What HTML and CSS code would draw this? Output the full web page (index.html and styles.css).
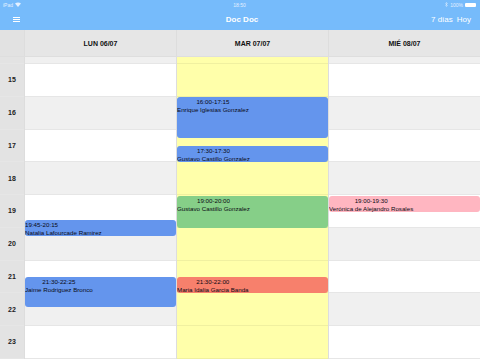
FILE: index.html
```html
<!DOCTYPE html>
<html lang="es">
<head>
    <meta charset="UTF-8">
    <meta name="viewport" content="width=device-width, initial-scale=1.0">
    <title>Doc Doc</title>
    <link rel="stylesheet" href="styles.css">
</head>
<body>
    <div class="top">
        <div class="status">
            <div class="status-left">
                <span>iPad</span>
                <svg width="6" height="5" viewBox="0 0 6 5"><path d="M0 1.6 Q3 -0.6 6 1.6 L3 5 Z" fill="#e4f0ff"/></svg>
            </div>
            <div class="status-time">18:50</div>
            <div class="status-right">
                <svg width="3" height="5" viewBox="0 0 3 5"><path d="M0.3 1.3 L2.5 3.6 L1.4 4.6 L1.4 0.4 L2.5 1.4 L0.3 3.7" fill="none" stroke="#e4f0ff" stroke-width="0.5"/></svg>
                <span>100%</span>
                <span class="battery"></span>
            </div>
        </div>
        <div class="navbar">
            <div class="menu">
                <span></span><span></span><span></span>
            </div>
            <div class="title">Doc Doc</div>
            <div class="nav-right">
                <span>7 días</span>
                <span>Hoy</span>
            </div>
        </div>
    </div>

    <div class="head">
        <div class="head-gutter"></div>
        <div class="head-day">LUN 06/07</div>
        <div class="head-day">MAR 07/07</div>
        <div class="head-day">MIÉ 08/07</div>
    </div>

    <div class="cal">
        <div class="gutter">
            <div class="slot first"></div>
            <div class="slot">15</div>
            <div class="slot">16</div>
            <div class="slot">17</div>
            <div class="slot">18</div>
            <div class="slot">19</div>
            <div class="slot">20</div>
            <div class="slot">21</div>
            <div class="slot">22</div>
            <div class="slot">23</div>
        </div>

        <div class="day">
            <div class="slot first odd"></div>
            <div class="slot"></div>
            <div class="slot odd"></div>
            <div class="slot"></div>
            <div class="slot odd"></div>
            <div class="slot"></div>
            <div class="slot odd"></div>
            <div class="slot"></div>
            <div class="slot odd"></div>
            <div class="slot"></div>

            <div class="event blue" style="top: 162.6px; height: 16.4px;">
                <div class="event-text left"><div>19:45-20:15</div><div>Natalia Lafourcade Ramirez</div></div>
            </div>
            <div class="event blue" style="top: 219.9px; height: 30px;">
                <div class="event-text"><div>21:30-22:25</div><div>Jaime Rodriguez Bronco</div></div>
            </div>
        </div>

        <div class="day today">
            <div class="slot first"></div>
            <div class="slot"></div>
            <div class="slot"></div>
            <div class="slot"></div>
            <div class="slot"></div>
            <div class="slot"></div>
            <div class="slot"></div>
            <div class="slot"></div>
            <div class="slot"></div>
            <div class="slot"></div>

            <div class="event blue" style="top: 39.8px; height: 40.9px;">
                <div class="event-text"><div>16:00-17:15</div><div>Enrique Iglesias Gonzalez</div></div>
            </div>
            <div class="event blue" style="top: 88.9px; height: 16.4px;">
                <div class="event-text"><div>17:30-17:30</div><div>Gustavo Castillo Gonzalez</div></div>
            </div>
            <div class="event green" style="top: 138.5px; height: 32.8px;">
                <div class="event-text"><div>19:00-20:00</div><div>Gustavo Castillo Gonzalez</div></div>
            </div>
            <div class="event red" style="top: 219.9px; height: 16.4px;">
                <div class="event-text"><div>21:30-22:00</div><div>Maria Idalia Garcia Banda</div></div>
            </div>
        </div>

        <div class="day">
            <div class="slot first odd"></div>
            <div class="slot"></div>
            <div class="slot odd"></div>
            <div class="slot"></div>
            <div class="slot odd"></div>
            <div class="slot"></div>
            <div class="slot odd"></div>
            <div class="slot"></div>
            <div class="slot odd"></div>
            <div class="slot"></div>

            <div class="event pink" style="top: 138.5px; height: 16.4px;">
                <div class="event-text"><div>19:00-19:30</div><div>Verónica de Alejandro Rosales</div></div>
            </div>
        </div>
    </div>
</body>
</html>
```

FILE: styles.css
```css
body {
    margin: 0;
    padding: 0;
    width: 480px;
    height: 360px;
    overflow: hidden;
    font-family: "Liberation Sans", Arial, sans-serif;
    background-color: #ffffff;
}
.top {
    background-color: #76bbfb;
    color: #ffffff;
    height: 30px;
}
.status {
    height: 9px;
    display: flex;
    align-items: center;
    justify-content: space-between;
    padding: 0 4px 0 3px;
    font-size: 5px;
    color: #e4f0ff;
}
.status-left, .status-right {
    display: flex;
    align-items: center;
    gap: 2px;
    width: 40px;
}
.status-right {
    justify-content: flex-end;
}
.battery {
    width: 11px;
    height: 4px;
    background-color: #ffffff;
    border-radius: 1px;
}
.navbar {
    height: 21px;
    display: flex;
    align-items: center;
    justify-content: space-between;
    padding: 0 9px 0 13px;
}
.menu {
    width: 60px;
    display: flex;
    flex-direction: column;
    gap: 1px;
}
.menu span {
    display: block;
    width: 7px;
    height: 1px;
    background-color: #ffffff;
}
.title {
    font-size: 8px;
    font-weight: bold;
}
.nav-right {
    width: 60px;
    display: flex;
    justify-content: flex-end;
    gap: 4px;
    font-size: 8px;
}
.head {
    display: grid;
    grid-template-columns: 24px 1fr 1fr 1fr;
    height: 27px;
    background-color: #e6e6e6;
    border-bottom: 1px solid #dedede;
    box-sizing: border-box;
}
.head-gutter {
    background-color: #e2e2e2;
}
.head-day {
    display: flex;
    align-items: center;
    justify-content: center;
    font-size: 7px;
    font-weight: bold;
    color: #111111;
    border-left: 1px solid #dddddd;
}
.cal {
    display: grid;
    grid-template-columns: 24px 1fr 1fr 1fr;
}
.gutter {
    background-color: #e3e3e3;
}
.gutter .slot {
    display: flex;
    align-items: center;
    justify-content: center;
    font-size: 7px;
    font-weight: bold;
    color: #222222;
}
.slot {
    height: 32.75px;
    box-sizing: border-box;
    border-bottom: 1px solid #e6e6e6;
}
.slot.first {
    height: 7px;
}
.day {
    position: relative;
    background-color: #ffffff;
    border-left: 1px solid #dddddd;
}
.day .slot.odd {
    background-color: #f0f0f0;
}
.day.today {
    background-color: #ffffaa;
}
.day.today .slot {
    border-bottom-color: #f0f0a0;
}
.event {
    position: absolute;
    left: 0;
    right: 0;
    border-radius: 3px;
    box-sizing: border-box;
    padding-top: 1px;
    overflow: hidden;
}
.event-text {
    display: inline-block;
    text-align: center;
    font-size: 6.2px;
    line-height: 7.4px;
    color: #0a0a14;
    white-space: nowrap;
}
.event-text div:last-child {
    text-align: left;
}
.event-text.left {
    text-align: left;
}
.blue {
    background-color: #6495ed;
}
.green {
    background-color: #86cf88;
}
.red {
    background-color: #f7806c;
}
.pink {
    background-color: #ffb6c1;
}
```
